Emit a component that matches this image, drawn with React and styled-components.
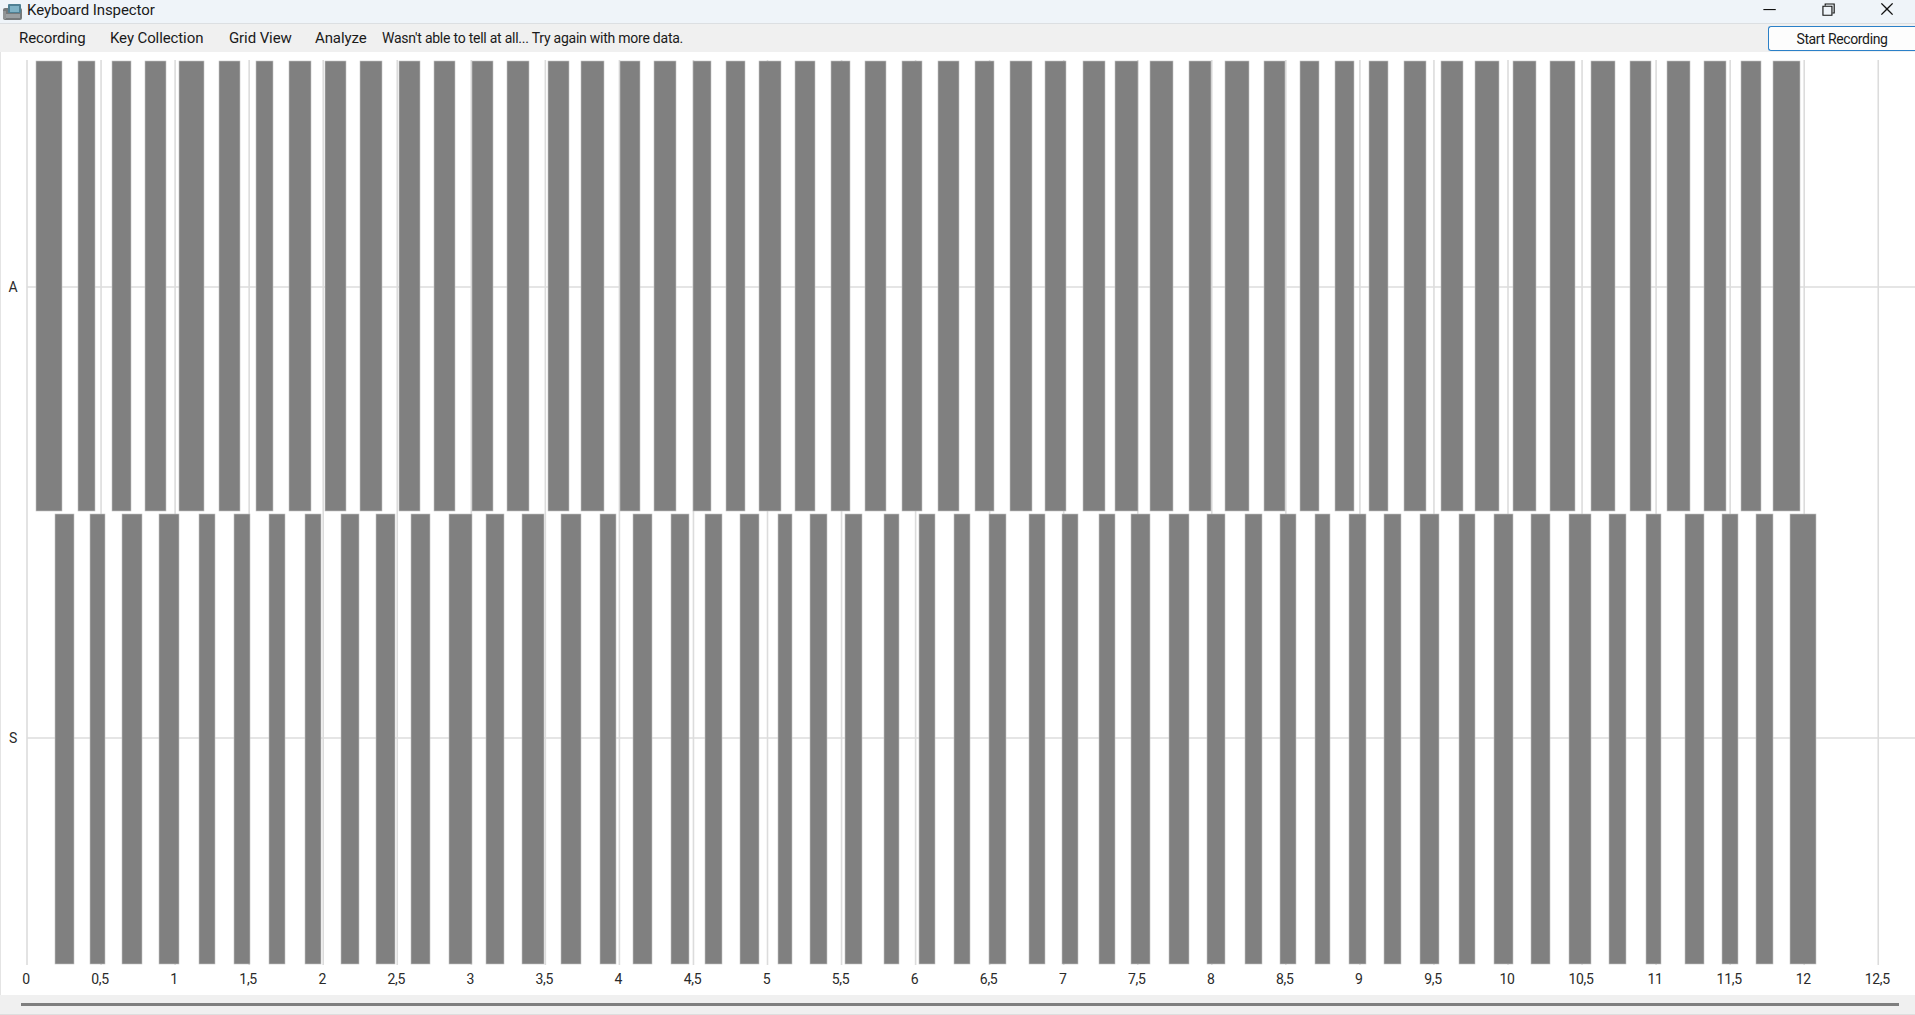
import React from "react";
import styled, { createGlobalStyle } from "styled-components";
import { VscChromeMinimize, VscChromeRestore, VscChromeClose } from "react-icons/vsc";

const GlobalStyle = createGlobalStyle`
  html, body {
    margin: 0;
    height: 100%;
    background: #fff;
    overflow: hidden;
    font-family: "Roboto", "Liberation Sans", sans-serif;
  }
  #root { height: 100%; }
`;

const Window = styled.div`
  display: flex;
  flex-direction: column;
  width: 1915px;
  height: 1015px;
  color: #1a1a1a;
`;

const TitleBar = styled.div`
  display: flex;
  align-items: center;
  height: 24px;
  flex: none;
  box-sizing: border-box;
  padding-left: 2px;
  background: #eff4f9;
  border-bottom: 1px solid #dcdfe2;
`;

const AppIcon = styled.svg`
  width: 21px;
  height: 18px;
  margin-right: 4px;
`;

const AppTitle = styled.span`
  flex: 1;
  font-size: 15px;
  letter-spacing: -0.08px;
  transform: translateY(-2px);
`;

const WindowControls = styled.div`
  display: flex;
  align-items: center;
  gap: 41px;
  padding-right: 19px;
  transform: translateY(-3px);
`;

const ControlButton = styled.span`
  display: flex;
  width: 18px;
  height: 18px;
  align-items: center;
  justify-content: center;
  font-size: 18px;
  color: #111;
`;

const MenuBar = styled.div`
  display: flex;
  align-items: center;
  height: 28px;
  flex: none;
  background: #f0f0f0;
  padding-left: 19px;
  font-size: 15px;
  letter-spacing: -0.1px;
`;

const MenuItem = styled.span`
  margin-right: ${(p) => p.$gap}px;
  width: ${(p) => p.$width}px;
  white-space: nowrap;
`;

const StatusText = styled.span`
  flex: 1;
  font-size: 14px;
  letter-spacing: -0.24px;
  white-space: nowrap;
`;

const RecordButton = styled.button`
  width: 147px;
  height: 25px;
  box-sizing: border-box;
  padding: 0;
  margin-top: 1px;
  background: #fdfdfd;
  border: 1.5px solid #2b80c8;
  border-right: 0;
  border-radius: 3px 0 0 3px;
  font: inherit;
  font-size: 14px;
  letter-spacing: -0.36px;
  color: #1a1a1a;
`;

const ChartArea = styled.div`
  flex: 1;
  min-height: 0;
  background: #fff;
  box-shadow: inset 1px 0 0 #e4e4e4;
`;

const ChartSvg = styled.svg`
  display: block;
  width: 100%;
  height: 100%;
`;

const TickLabel = styled.text`
  font-family: "Roboto", "Liberation Sans", sans-serif;
  font-size: 14px;
  letter-spacing: -0.3px;
  fill: #2a2a2a;
`;

const ScrollTrack = styled.div`
  display: flex;
  align-items: center;
  height: 20px;
  flex: none;
  box-sizing: border-box;
  padding: 0 16px 0 21px;
  background: #f0f0f0;
  border-bottom: 1px solid #dedede;
`;

const ScrollThumb = styled.div`
  flex: 1;
  height: 3px;
  background: #7f7f7f;
`;

const CHART_TOP = 52;

// [start, end] in page pixels, read off the recording
const TOP_BARS = [
  [36, 62], [78, 95], [112, 131], [145, 166], [179, 204], [219, 240], [256, 273], [289, 311],
  [325, 346], [360, 382], [399, 420], [434, 455], [472, 493], [507, 529], [548, 569], [581, 604],
  [620, 640], [654, 676], [693, 711], [726, 745], [759, 781], [795, 815], [831, 850], [865, 886],
  [902, 922], [938, 959], [975, 994], [1010, 1032], [1045, 1066], [1083, 1105], [1115, 1138],
  [1150, 1173], [1189, 1211], [1225, 1249], [1264, 1285], [1300, 1319], [1335, 1354], [1369, 1388],
  [1404, 1426], [1441, 1463], [1475, 1499], [1513, 1536], [1550, 1575], [1591, 1615], [1630, 1651],
  [1667, 1690], [1704, 1726], [1741, 1761], [1773, 1800],
];

const BOTTOM_BARS = [
  [55, 74], [90, 105], [122, 142], [159, 179], [199, 215], [234, 250], [269, 285], [305, 321],
  [341, 359], [376, 395], [411, 430], [449, 472], [486, 504], [522, 544], [561, 581], [600, 616],
  [633, 652], [671, 689], [705, 722], [740, 759], [778, 792], [810, 827], [845, 862], [884, 899],
  [919, 935], [954, 970], [989, 1006], [1029, 1045], [1062, 1078], [1099, 1115], [1131, 1150],
  [1169, 1189], [1207, 1225], [1245, 1262], [1280, 1296], [1315, 1330], [1349, 1366], [1384, 1401],
  [1420, 1439], [1459, 1475], [1494, 1513], [1531, 1550], [1569, 1591], [1609, 1626], [1646, 1661],
  [1685, 1704], [1722, 1738], [1756, 1773], [1790, 1816],
];

const TICKS = Array.from({ length: 26 }, (_, i) => ({
  x: 27 + i * 74.05,
  label: String(i / 2).replace(".", ","),
}));

const KeyBars = ({ bars, top, bottom }) =>
  bars.map(([start, end]) => (
    <rect
      key={start}
      x={start}
      y={top - CHART_TOP}
      width={end - start}
      height={bottom - top}
      fill="#808080"
      stroke="#c4c4c4"
      strokeWidth="0.6"
    />
  ));

const Chart = () => (
  <ChartSvg viewBox="0 0 1915 943">
    {TICKS.map((tick) => (
      <line
        key={tick.x}
        x1={tick.x}
        x2={tick.x}
        y1={8}
        y2={913}
        stroke="#dcdcdc"
        strokeWidth="1.6"
      />
    ))}
    <line x1="27" x2="1915" y1="235" y2="235" stroke="#dcdcdc" strokeWidth="1.6" />
    <line x1="27" x2="1915" y1="686" y2="686" stroke="#dcdcdc" strokeWidth="1.6" />
    <KeyBars bars={TOP_BARS} top={61} bottom={511} />
    <KeyBars bars={BOTTOM_BARS} top={514} bottom={964} />
    <TickLabel x="13" y="240" textAnchor="middle">A</TickLabel>
    <TickLabel x="13" y="691" textAnchor="middle">S</TickLabel>
    {TICKS.map((tick) => (
      <TickLabel key={tick.label} x={tick.x - 1} y={932} textAnchor="middle">
        {tick.label}
      </TickLabel>
    ))}
  </ChartSvg>
);

const KeyboardIcon = () => (
  <AppIcon viewBox="0 0 21 18">
    <rect x="1" y="5" width="19" height="12" rx="2" fill="#75797b" />
    <rect x="6" y="1" width="13" height="9" rx="1" fill="#4f8094" />
    <rect x="8" y="3" width="9" height="6" fill="#7fb2c6" />
    <rect x="4" y="11" width="14" height="4" fill="#9a9fa2" />
    <rect x="1" y="8" width="3" height="8" fill="#8f9395" />
  </AppIcon>
);

export default function App() {
  return (
    <>
      <GlobalStyle />
      <Window>
        <TitleBar>
          <KeyboardIcon />
          <AppTitle>Keyboard Inspector</AppTitle>
          <WindowControls>
            <ControlButton><VscChromeMinimize /></ControlButton>
            <ControlButton><VscChromeRestore /></ControlButton>
            <ControlButton><VscChromeClose /></ControlButton>
          </WindowControls>
        </TitleBar>
        <MenuBar>
          <MenuItem $width={66} $gap={25}>Recording</MenuItem>
          <MenuItem $width={94} $gap={25}>Key Collection</MenuItem>
          <MenuItem $width={62} $gap={24}>Grid View</MenuItem>
          <MenuItem $width={51} $gap={16}>Analyze</MenuItem>
          <StatusText>Wasn't able to tell at all... Try again with more data.</StatusText>
          <RecordButton>Start Recording</RecordButton>
        </MenuBar>
        <ChartArea>
          <Chart />
        </ChartArea>
        <ScrollTrack>
          <ScrollThumb />
        </ScrollTrack>
      </Window>
    </>
  );
}
